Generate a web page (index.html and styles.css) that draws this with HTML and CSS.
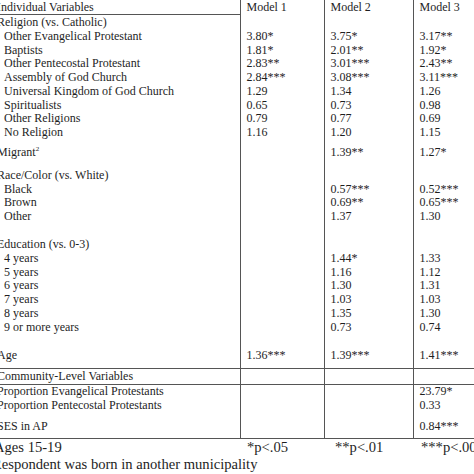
FILE: index.html
```html
<!DOCTYPE html>
<html>
<head>
<meta charset="utf-8">
<link rel="stylesheet" href="styles.css">
</head>
<body>
<table class="tbl">
  <colgroup>
    <col class="c1"><col class="c2"><col class="c3"><col class="c4">
  </colgroup>
  <tr class="head">
    <td class="lab top">Individual Variables</td><td class="v">Model 1</td><td class="v">Model 2</td><td class="v">Model 3</td>
  </tr>
  <tr class="r first"><td class="lab">Religion (vs. Catholic)</td><td class="v"></td><td class="v"></td><td class="v"></td></tr>
  <tr class="r"><td class="lab sub">Other Evangelical Protestant</td><td class="v">3.80*</td><td class="v">3.75*</td><td class="v">3.17**</td></tr>
  <tr class="r"><td class="lab sub">Baptists</td><td class="v">1.81*</td><td class="v">2.01**</td><td class="v">1.92*</td></tr>
  <tr class="r"><td class="lab sub">Other Pentecostal Protestant</td><td class="v">2.83**</td><td class="v">3.01***</td><td class="v">2.43**</td></tr>
  <tr class="r"><td class="lab sub">Assembly of God Church</td><td class="v">2.84***</td><td class="v">3.08***</td><td class="v">3.11***</td></tr>
  <tr class="r"><td class="lab sub">Universal Kingdom of God Church</td><td class="v">1.29</td><td class="v">1.34</td><td class="v">1.26</td></tr>
  <tr class="r"><td class="lab sub">Spiritualists</td><td class="v">0.65</td><td class="v">0.73</td><td class="v">0.98</td></tr>
  <tr class="r"><td class="lab sub">Other Religions</td><td class="v">0.79</td><td class="v">0.77</td><td class="v">0.69</td></tr>
  <tr class="r"><td class="lab sub">No Religion</td><td class="v">1.16</td><td class="v">1.20</td><td class="v">1.15</td></tr>
  <tr class="r gap-a"><td class="lab">Migrant<sup>2</sup></td><td class="v"></td><td class="v">1.39**</td><td class="v">1.27*</td></tr>
  <tr class="r gap-b"><td class="lab">Race/Color (vs. White)</td><td class="v"></td><td class="v"></td><td class="v"></td></tr>
  <tr class="r"><td class="lab sub">Black</td><td class="v"></td><td class="v">0.57***</td><td class="v">0.52***</td></tr>
  <tr class="r"><td class="lab sub">Brown</td><td class="v"></td><td class="v">0.69**</td><td class="v">0.65***</td></tr>
  <tr class="r"><td class="lab sub">Other</td><td class="v"></td><td class="v">1.37</td><td class="v">1.30</td></tr>
  <tr class="r gap-c"><td class="lab">Education (vs. 0-3)</td><td class="v"></td><td class="v"></td><td class="v"></td></tr>
  <tr class="r"><td class="lab sub">4 years</td><td class="v"></td><td class="v">1.44*</td><td class="v">1.33</td></tr>
  <tr class="r"><td class="lab sub">5 years</td><td class="v"></td><td class="v">1.16</td><td class="v">1.12</td></tr>
  <tr class="r"><td class="lab sub">6 years</td><td class="v"></td><td class="v">1.30</td><td class="v">1.31</td></tr>
  <tr class="r"><td class="lab sub">7 years</td><td class="v"></td><td class="v">1.03</td><td class="v">1.03</td></tr>
  <tr class="r"><td class="lab sub">8 years</td><td class="v"></td><td class="v">1.35</td><td class="v">1.30</td></tr>
  <tr class="r"><td class="lab sub">9 or more years</td><td class="v"></td><td class="v">0.73</td><td class="v">0.74</td></tr>
  <tr class="r gap-c age"><td class="lab">Age</td><td class="v">1.36***</td><td class="v">1.39***</td><td class="v">1.41***</td></tr>
  <tr class="comm"><td class="lab">Community-Level Variables</td><td class="v"></td><td class="v"></td><td class="v"></td></tr>
  <tr class="r"><td class="lab">Proportion Evangelical Protestants</td><td class="v"></td><td class="v"></td><td class="v">23.79*</td></tr>
  <tr class="r"><td class="lab">Proportion Pentecostal Protestants</td><td class="v"></td><td class="v"></td><td class="v">0.33</td></tr>
  <tr class="r ses"><td class="lab">SES in AP</td><td class="v"></td><td class="v"></td><td class="v">0.84***</td></tr>
  <tr class="foot"><td class="lab fl">Ages 15-19</td><td class="f">*p&lt;.05</td><td class="f f2">**p&lt;.01</td><td class="f f3">***p&lt;.001</td></tr>
  <tr class="foot"><td class="lab fl fr" colspan="4">Respondent was born in another municipality</td></tr>
</table>
</body>
</html>
```

FILE: styles.css
```css
html, body {
  margin: 0;
  padding: 0;
  background: #ffffff;
  overflow: hidden;
  width: 474px;
  height: 474px;
}

.tbl {
  margin-left: -3px;
  border-collapse: collapse;
  table-layout: fixed;
  width: 560px;
  font-family: "Liberation Serif", "Times New Roman", serif;
  font-size: 12px;
  color: #1e1e1e;
}

.c1 { width: 243px; }
.c2 { width: 84px; }
.c3 { width: 89px; }
.c4 { width: 144px; }

.tbl td {
  padding: 0;
  line-height: 13.75px;
  white-space: nowrap;
  vertical-align: top;
}

.tbl td.v {
  border-left: 1.5px solid #555555;
  padding-left: 6px;
}

.lab.sub { padding-left: 7px; }

.head td { line-height: 14px; }
.head td.top { border-bottom: 1.5px solid #555555; }

.first td { padding-top: 1px; }
.gap-a td { padding-top: 6.25px; }
.gap-b td { padding-top: 9px; }
.gap-c td { padding-top: 14.25px; }
.age td { padding-bottom: 5.5px; border-bottom: 1.5px solid #555555; }

.comm td {
  line-height: 15px;
  border-bottom: 1.5px solid #555555;
}

.ses td { padding-top: 7.25px; padding-bottom: 4.5px; border-bottom: 1.5px solid #555555; }

sup {
  font-size: 7px;
  line-height: 0;
  vertical-align: 5px;
}

.foot td {
  font-size: 14.6px;
  line-height: 17.5px;
}
.foot td.fl { text-indent: -3px; }
.foot td.fr { text-indent: -5px; }
.foot td.f { padding-left: 7px; }
.foot td.f2 { padding-left: 11px; }
.foot td.f3 { padding-left: 8px; }
```
